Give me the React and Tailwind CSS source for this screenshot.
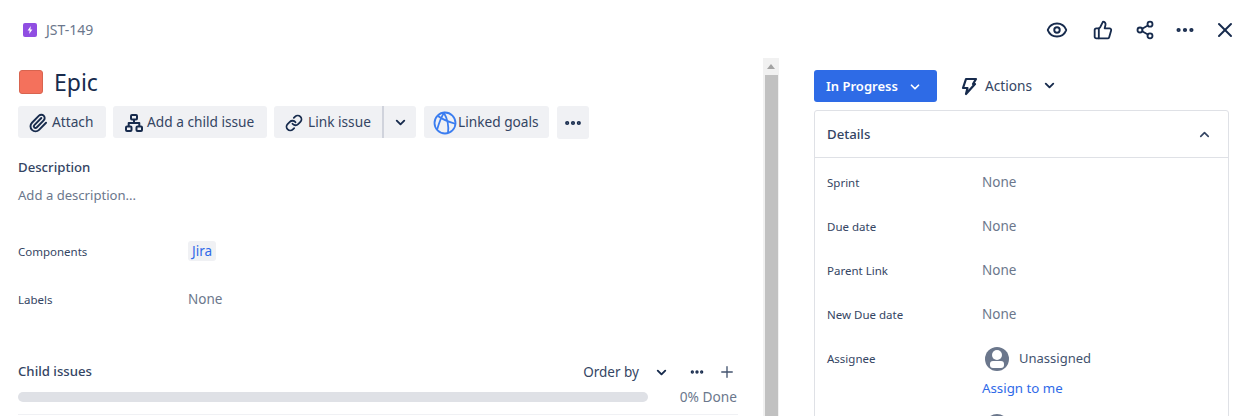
import React from "react";
import { ChevronDown, ChevronUp, Ellipsis, Plus, X, Eye, ThumbsUp, Share2, Paperclip, Link } from "lucide-react";

const ActionButton = ({ children, className = "" }) => (
  <button className={`h-8 pt-px flex items-center bg-[#f0f1f4] rounded-[3px] text-[13.7px] text-[#344563] ${className}`}>
    {children}
  </button>
);

const DetailRow = ({ label, children }) => (
  <div className="flex items-center h-11">
    <div className="w-[155px] text-[11.5px] text-[#344563]">{label}</div>
    <div className="text-[13.5px] text-[#6b778c] -mt-[2px]">{children}</div>
  </div>
);

export default function App() {
  return (
    <div className="w-[1246px] h-[416px] overflow-hidden bg-white font-['Noto_Sans',sans-serif]">
      {/* Header */}
      <div className="h-[58px] flex items-center justify-between pl-[23px] pr-[10px] pt-[2px]">
        <div className="flex items-center gap-[9px]">
          <div className="w-[14px] h-[14px] rounded-[2px] bg-[#904ee2] flex items-center justify-center">
            <svg width="10" height="10" viewBox="0 0 10 10">
              <path d="M5.8 1 2.6 5.6h2L4.2 9l3.2-4.6h-2z" fill="#fff" />
            </svg>
          </div>
          <span className="text-[14px] text-[#6b778c] -mt-[2px]">JST-149</span>
        </div>
        <div className="flex items-center text-[#172b4d]">
          <Eye size={22} strokeWidth={2.1} className="mr-[25px]" />
          <ThumbsUp size={20} strokeWidth={2.2} className="mr-[22px]" />
          <Share2 size={20} strokeWidth={2.2} className="mr-[19px]" />
          <Ellipsis size={22} strokeWidth={2.6} className="mr-[17px]" />
          <X size={24} strokeWidth={2} className="-mr-[1px]" />
        </div>
      </div>

      <div className="flex">
        {/* Left column */}
        <div className="w-[763px] pl-[18px] pr-[24px]">
          <div className="flex items-center gap-[11px] h-[48px] pl-px">
            <div className="w-6 h-6 rounded-[3px] bg-[#f4715c] border border-[#d8644f]" />
            <h1 className="text-[23px] text-[#172b4d] leading-7">Epic</h1>
          </div>
          <div className="flex items-start gap-[7px]">
            <ActionButton className="w-[88px] pl-[10px] gap-[4px]">
              <Paperclip size={20} strokeWidth={2.3} className="text-[#172b4d]" /> Attach
            </ActionButton>
            <ActionButton className="w-[154px] pl-[12px] gap-[4px]">
              <svg width="18" height="18" viewBox="0 0 18 18" fill="none" stroke="#172b4d" strokeWidth="2" strokeLinejoin="round">
                <rect x="6" y="1" width="6" height="4.5" rx="1" />
                <rect x="1" y="12.5" width="5.5" height="4.5" rx="1" />
                <rect x="11.5" y="12.5" width="5.5" height="4.5" rx="1" />
                <path d="M9 5.5V9M3.7 12.5V9h10.6v3.5" />
              </svg>
              Add a child issue
            </ActionButton>
            <div className="flex">
              <ActionButton className="w-[110px] pl-[11px] gap-[5px] rounded-r-none border-r-2 border-[#d0d3dc]">
                <Link size={18} strokeWidth={2.4} className="text-[#172b4d]" /> Link issue
              </ActionButton>
              <ActionButton className="w-[32px] justify-center rounded-l-none">
                <ChevronDown size={15} strokeWidth={3} className="text-[#172b4d]" />
              </ActionButton>
            </div>
            <ActionButton className="w-[125px] pl-[9px] gap-[1px] ml-px">
              <svg width="24" height="24" viewBox="0 0 24 24" fill="none" stroke="#3b7df0" strokeWidth="1.8">
                <circle cx="12" cy="12" r="10.5" />
                <path d="M4 19C6 12 8 6 11 2c3 5 5 12 4 20M5 5c5 4 11 6 18 8" />
              </svg>
              Linked goals
            </ActionButton>
            <ActionButton className="w-[32px] !h-[33px] justify-center ml-px">
              <Ellipsis size={20} strokeWidth={3} className="text-[#172b4d]" />
            </ActionButton>
          </div>

          <h2 className="mt-[18px] text-[13.2px] text-[#344563] font-medium leading-5">Description</h2>
          <p className="mt-[8px] text-[13.1px] text-[#6b778c] leading-5">Add a description...</p>

          <div className="mt-[33px] flex items-center h-6">
            <div className="w-[170px] text-[11.5px] text-[#344563] mt-[3px]">Components</div>
            <span className="bg-[#f0f1f4] rounded-[3px] px-[4px] h-5 leading-5 text-[13.5px] text-[#2f6ae8] mt-px">Jira</span>
          </div>
          <div className="mt-[24px] flex items-center h-6">
            <div className="w-[170px] text-[11.5px] text-[#344563] mt-[3px]">Labels</div>
            <span className="text-[13.5px] text-[#6b778c] mt-[3px]">None</span>
          </div>

          <div className="mt-[50px] flex items-center justify-between h-6">
            <h2 className="text-[13.2px] text-[#344563] font-medium">Child issues</h2>
            <div className="flex items-center text-[#172b4d]">
              <span className="text-[13.5px] text-[#344563]">Order by</span>
              <ChevronDown size={15} strokeWidth={3} className="ml-[15px] mr-[20px]" />
              <Ellipsis size={16} strokeWidth={3} className="mr-[13px]" />
              <Plus size={18} strokeWidth={1.8} className="text-[#44546f] mr-[3px]" />
            </div>
          </div>
          <div className="mt-[3px] flex items-center">
            <div className="w-[630px] h-[10px] rounded-full bg-[#dfe1e6]" />
            <span className="ml-auto mr-[2px] text-[13.7px] text-[#6b778c]">0% Done</span>
          </div>
          <div className="mt-[6px] h-px w-[720px] bg-[#f0f1f4]" />
        </div>

        {/* Scrollbar */}
        <div className="w-[16px] h-[358px] bg-[#f1f1f1] flex flex-col items-center">
          <svg width="8" height="5" viewBox="0 0 8 5" className="mt-[6px] mb-[6px]">
            <path d="M4 0 8 5H0z" fill="#a3a3a3" />
          </svg>
          <div className="w-[13px] flex-1 bg-[#c1c1c1]" />
        </div>

        {/* Right column */}
        <div className="ml-[35px] w-[415px] pt-[12px]">
          <div className="flex items-center h-8">
            <button className="w-[123px] h-8 pt-px bg-[#2e6be6] rounded-[3px] text-white text-[13px] font-semibold flex items-center pl-[12px] gap-[10px]">
              In Progress
              <ChevronDown size={14} strokeWidth={3} />
            </button>
            <div className="ml-[22px] flex items-center text-[#344563] text-[13.7px]">
              <svg width="20" height="20" viewBox="0 0 20 20" fill="none" stroke="#172b4d" strokeWidth="2.2" strokeLinejoin="round">
                <path d="M7 3h10l-3 5h2L7 18l1.5-6H4z" />
              </svg>
              <span className="ml-[6px]">Actions</span>
              <ChevronDown size={15} strokeWidth={3} className="ml-[10px] text-[#172b4d]" />
            </div>
          </div>
          <div className="mt-[8px] border border-[#dfe1e6] rounded-[3px] h-[400px]">
            <div className="h-[47px] flex items-center justify-between pl-[12px] pr-[16px] border-b border-[#dfe1e6]">
              <span className="text-[13.2px] text-[#344563] font-medium mt-[2px]">Details</span>
              <ChevronUp size={15} strokeWidth={2.6} className="text-[#344563]" />
            </div>
            <div className="pl-[12px] pt-[3px]">
              <DetailRow label="Sprint">None</DetailRow>
              <DetailRow label="Due date">None</DetailRow>
              <DetailRow label="Parent Link">None</DetailRow>
              <DetailRow label="New Due date">None</DetailRow>
              <div className="flex mt-[10px]">
                <div className="w-[155px] text-[11.5px] text-[#344563] pt-[3px]">Assignee</div>
                <div>
                  <div className="flex items-center">
                    <div className="w-6 h-6 ml-[3px] rounded-full bg-[#6b778c] overflow-hidden flex flex-col items-center">
                      <div className="w-[10px] h-[10px] rounded-full bg-white mt-[3px]" />
                      <div className="w-[14px] h-[7px] rounded-[3px] bg-white mt-px" />
                    </div>
                    <span className="ml-[10px] text-[13px] text-[#42526e]">Unassigned</span>
                  </div>
                  <div className="mt-[7px] text-[13.3px] text-[#2f6ae8] leading-5">Assign to me</div>
                </div>
              </div>
              <div className="w-6 h-6 ml-[158px] mt-[16px] rounded-full bg-[#6b778c]" />
            </div>
          </div>
        </div>
      </div>
    </div>
  );
}
